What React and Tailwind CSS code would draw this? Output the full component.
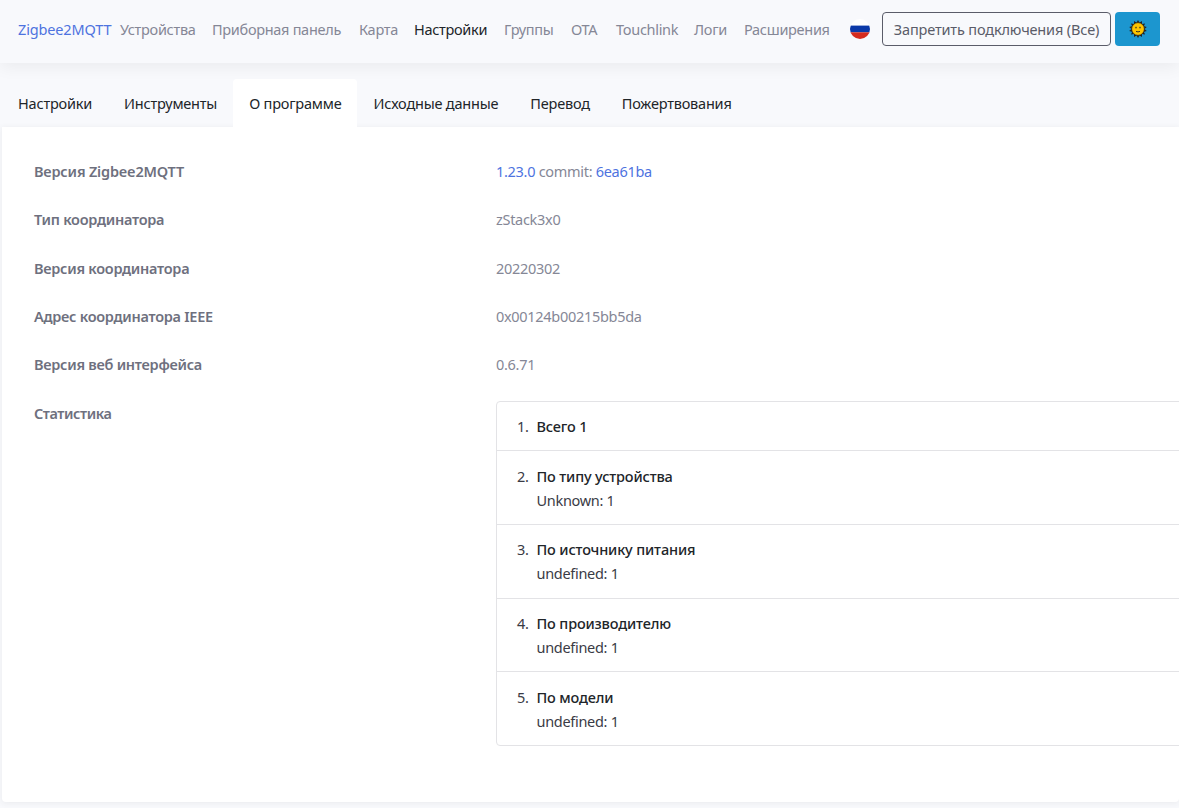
const navItems = [
    { label: "Устройства", width: "w-[92px]" },
    { label: "Приборная панель", width: "w-[147px]" },
    { label: "Карта", width: "w-[55px]" },
    { label: "Настройки", width: "w-[90px]", active: true },
    { label: "Группы", width: "w-[67px]" },
    { label: "OTA", width: "w-[45px]" },
    { label: "Touchlink", width: "w-[78px]" },
    { label: "Логи", width: "w-[50px]" },
    { label: "Расширения", width: "w-[102px]" },
];

const tabs = ["Настройки", "Инструменты", "О программе", "Исходные данные", "Перевод", "Пожертвования"];

const rows = [
    { label: "Тип координатора", value: "zStack3x0" },
    { label: "Версия координатора", value: "20220302" },
    { label: "Адрес координатора IEEE", value: "0x00124b00215bb5da" },
    { label: "Версия веб интерфейса", value: "0.6.71" },
];

const stats = [
    { title: "Всего 1" },
    { title: "По типу устройства", text: "Unknown: 1" },
    { title: "По источнику питания", text: "undefined: 1" },
    { title: "По производителю", text: "undefined: 1" },
    { title: "По модели", text: "undefined: 1" },
];

function Flag() {
    return (
        <svg width="20" height="20" viewBox="0 0 20 20" className="shrink-0">
            <defs>
                <clipPath id="flag-clip">
                    <circle cx="10" cy="10" r="10" />
                </clipPath>
            </defs>
            <g clipPath="url(#flag-clip)">
                <rect width="20" height="7" fill="#ffffff" />
                <rect y="6.6" width="20" height="6.7" fill="#0b39a8" />
                <rect y="13.3" width="20" height="6.7" fill="#d52b1e" />
            </g>
        </svg>
    );
}

function Sun() {
    const spikes = [];
    for (let i = 0; i < 14; i++) {
        spikes.push(
            <path key={i} d="M9 0 L11.2 4 L6.8 4 Z" fill="#222222" transform={`rotate(${(i * 360) / 14} 9 9)`} />
        );
    }
    return (
        <svg width="18" height="18" viewBox="0 0 18 18">
            {spikes}
            <circle cx="9" cy="9" r="6.4" fill="#fdc400" stroke="#222222" strokeWidth="0.8" />
            <rect x="6.4" y="6.8" width="1.2" height="1.5" fill="#222222" />
            <rect x="10.4" y="6.8" width="1.2" height="1.5" fill="#222222" />
            <path d="M7 11.4 Q9 12.4 11 11.4" stroke="#222222" strokeWidth="0.9" fill="none" />
        </svg>
    );
}

export default function App() {
    return (
        <div className="h-[808px] overflow-hidden bg-[#f8f9fc] font-['Noto_Sans',sans-serif] text-[14.5px] leading-6 text-[#212529]">
            <nav className="relative z-10 flex h-[63px] items-center bg-[#f8f9fc] pb-[5px] pl-[18px] pr-[19px] shadow-[0_4px_16px_rgba(0,0,0,0.06)]">
                <a className="w-[102px] shrink-0 tracking-[-0.15px] text-[#4e73df]">Zigbee2MQTT</a>
                <div className="flex">
                    {navItems.map((item) => (
                        <a
                            key={item.label}
                            className={"shrink-0 whitespace-nowrap tracking-[-0.3px] " + item.width + (item.active ? " text-[#212529]" : " text-[#858796]")}
                        >
                            {item.label}
                        </a>
                    ))}
                </div>
                <div className="ml-auto flex items-center">
                    <Flag />
                    <button className="ml-3 h-[34px] w-[229px] whitespace-nowrap rounded border border-[#5a5c69] text-center tracking-[-0.15px] text-[#5a5c69]">
                        Запретить подключения (Все)
                    </button>
                    <button className="ml-1 flex h-[34px] w-[45px] items-center justify-center rounded bg-[#1c96cf]">
                        <Sun />
                    </button>
                </div>
            </nav>

            <div className="flex h-[64px] items-end px-[2px]">
                {tabs.map((tab) => (
                    <a
                        key={tab}
                        className={
                            "flex h-[48px] items-center whitespace-nowrap rounded-t px-4 tracking-[-0.2px] text-[#212529]" +
                            (tab === "О программе" ? " bg-white" : "")
                        }
                    >
                        {tab}
                    </a>
                ))}
            </div>

            <div className="ml-[2px] h-[675px] rounded-b bg-white pl-8 pt-[32.2px] shadow-[0_1px_6px_rgba(58,59,69,0.08)]">
                <dl className="flex flex-col gap-[24.3px]">
                    <div className="flex">
                        <dt className="w-[462px] shrink-0 font-semibold tracking-[-0.18px] text-[#6e707e]">Версия Zigbee2MQTT</dt>
                        <dd className="tracking-[-0.3px] text-[#858796]">
                            <a className="text-[#4e73df]">1.23.0</a> commit: <a className="text-[#4e73df]">6ea61ba</a>
                        </dd>
                    </div>
                    {rows.map((row) => (
                        <div className="flex" key={row.label}>
                            <dt className="w-[462px] shrink-0 font-semibold tracking-[-0.27px] text-[#6e707e]">{row.label}</dt>
                            <dd className="tracking-[-0.3px] text-[#858796]">{row.value}</dd>
                        </div>
                    ))}
                    <div className="flex">
                        <dt className="w-[462px] shrink-0 font-semibold tracking-[-0.45px] text-[#6e707e]">Статистика</dt>
                        <dd className="-mr-5 grow">
                            <ol className="rounded border border-[#e3e3e6] tracking-[-0.3px]">
                                {stats.map((stat, index) => (
                                    <li key={stat.title} className={"flex px-5 py-[12.35px] " + (index > 0 ? "border-t border-[#e3e3e6]" : "")}>
                                        <span className="w-[19.5px] shrink-0 text-[#3a3b45]">{index + 1}.</span>
                                        <div>
                                            <div className="font-medium tracking-[-0.15px] text-[#212529]">{stat.title}</div>
                                            {stat.text && <div className="text-[#3a3b45]">{stat.text}</div>}
                                        </div>
                                    </li>
                                ))}
                            </ol>
                        </dd>
                    </div>
                </dl>
            </div>
        </div>
    );
}
